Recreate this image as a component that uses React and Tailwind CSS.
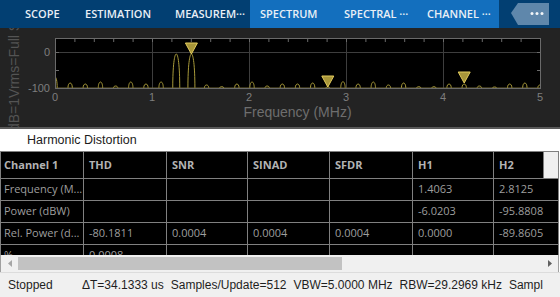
import React from "react"

const tops = [49, 55, 56, 54, 58, 54, 56, 54, 26, 26, 57, 58.7, 56, 54, 58, 56, 56, 55, 59, 53.7, 56, 54, 57, 55, 58.7, 58.7, 56, 56, 58, 59, 56, 55, 57]

function Bump({ x, top, w }) {
  const c = (top - 15) / 0.75
  return <path d={`M${x - w} 60 C${x - w} ${c} ${x + w} ${c} ${x + w} 60`} fill="none" stroke="#a89a3a" strokeWidth="1" />
}

function Marker({ x, y }) {
  return <polygon points={`${x - 6},${y} ${x + 6},${y} ${x},${y + 11}`} fill="#a8963a" stroke="#e2cb5c" strokeWidth="1" />
}

function Spectrum() {
  const px = f => 55 + f * 97
  const minor = []
  for (let f = 0.2; f < 5; f += 0.2) minor.push(px(f))
  return (
    <svg width="560" height="99" className="block">
      <rect x="0" y="0" width="560" height="99" fill="#232323" />
      <rect x="55.5" y="10.5" width="485" height="50" fill="#000" stroke="#6a6a6a" />
      {[1, 2, 3, 4].map(f => (
        <line key={f} x1={px(f) + 0.5} y1="11" x2={px(f) + 0.5} y2="60" stroke="#3e3e3e" />
      ))}
      <line x1="56" y1="24.5" x2="540" y2="24.5" stroke="#3e3e3e" />
      {minor.map((x, i) => (
        <line key={i} x1={x + 0.5} y1="11" x2={x + 0.5} y2="14" stroke="#6a6a6a" />
      ))}
      {[24.5, 42.5].map(y => (
        <g key={y}>
          <line x1="56" y1={y} x2="59" y2={y} stroke="#6a6a6a" />
          <line x1="537" y1={y} x2="540" y2={y} stroke="#6a6a6a" />
        </g>
      ))}
      <clipPath id="ax"><rect x="56" y="11" width="484" height="49" /></clipPath>
      <g clipPath="url(#ax)">
        {tops.map((t, k) => (
          <Bump key={k} x={px(k * 0.15625)} top={t} w={k === 8 || k === 9 ? 3.5 : 2.2} />
        ))}
        <line x1="56" y1="60" x2="540" y2="60" stroke="#6f6530" />
      </g>
      <Marker x={191.4} y={15} />
      <Marker x={327.8} y={48} />
      <Marker x={464.2} y={44} />
      <g fontFamily="'Liberation Sans', Arial, sans-serif" fontSize="11" fill="#7e7e7e">
        <text x="50" y="28" textAnchor="end">0</text>
        <text x="50" y="64" textAnchor="end">-100</text>
        {[0, 1, 2, 3, 4, 5].map(f => (
          <text key={f} x={px(f)} y="73" textAnchor="middle">{f}</text>
        ))}
      </g>
      <text x="297.5" y="89" textAnchor="middle" fontFamily="'Liberation Sans', Arial, sans-serif" fontSize="14" fill="#6e6e6e">Frequency (MHz)</text>
      <text transform="translate(19,103) rotate(-90)" fontFamily="'Liberation Sans', Arial, sans-serif" fontSize="14" fill="#545454">dB=1Vrms=Full Scale)</text>
    </svg>
  )
}

const rows = [
  ["Frequency (M...", "", "", "", "", "1.4063", "2.8125"],
  ["Power (dBW)", "", "", "", "", "-6.0203", "-95.8808"],
  ["Rel. Power (d...", "-80.1811", "0.0004", "0.0004", "0.0004", "0.0000", "-89.8605"],
  ["%", "0.0008", "", "", "", "", ""],
]

const widths = ["w-[83px]", "w-[83px]", "w-[81px]", "w-[82px]", "w-[83px]", "w-[81px]"]

export default function App() {
  return (
    <div className="w-[560px] h-[297px] overflow-hidden flex flex-col bg-white" style={{ fontFamily: "'Open Sans', 'Noto Sans', sans-serif" }}>
      {/* toolstrip */}
      <div className="h-[28px] flex bg-[#023f72] text-[11px] font-semibold text-[#e9eff6] shrink-0">
        <div className="w-[250px] flex items-center pl-[25px]">
          <div className="w-[60px]">SCOPE</div>
          <div className="w-[90px]">ESTIMATION</div>
          <div className="w-[75px]">MEASUREM···</div>
        </div>
        <div className="w-[249px] flex items-center pl-[10px] bg-[#136fbe]">
          <div className="w-[84px]">SPECTRUM</div>
          <div className="w-[83px]">SPECTRAL ···</div>
          <div className="w-[72px]">CHANNEL ···</div>
        </div>
        <div className="flex-1 flex items-center pl-[12px]">
          <svg width="40" height="24" className="block">
            <polygon points="0,11 7,1 38,1 38,23 7,23" fill="#5f87ab" />
            <circle cx="21" cy="11.5" r="1.5" fill="#f2f5f8" />
            <circle cx="26" cy="11.5" r="1.5" fill="#f2f5f8" />
            <circle cx="31" cy="11.5" r="1.5" fill="#f2f5f8" />
          </svg>
        </div>
      </div>

      {/* plot */}
      <div className="shrink-0 border-b-2 border-[#5a5a5a]">
        <Spectrum />
      </div>

      {/* title */}
      <div className="h-[22px] shrink-0 flex items-center pl-[27px] text-[12.5px] text-[#1c1c1c]" style={{ fontFamily: "'Liberation Sans', Arial, sans-serif" }}>
        Harmonic Distortion
      </div>

      {/* table */}
      <div className="h-[104px] shrink-0 overflow-hidden bg-black border-t border-l border-[#808080] mr-[1px]">
        <div className="h-[27px] flex border-b border-[#808080] text-[11px] font-bold text-[#b3b3b3]">
          {["Channel 1", "THD", "SNR", "SINAD", "SFDR", "H1"].map((h, i) => (
            <div key={h} className={`${widths[i]} shrink-0 flex items-center border-r border-[#808080] ${i === 0 ? "pl-[3px]" : "pl-[5px]"}`}>{h}</div>
          ))}
          <div className="w-[50px] shrink-0 flex items-center pl-[5px] border-r border-[#808080]">H2</div>
          <div className="flex-1 bg-[#f0f0f0] border-r border-[#808080]"></div>
        </div>
        {rows.map((r, ri) => (
          <div key={ri} className="h-[22px] flex border-b border-[#808080] text-[11px] text-[#9e9e9e]">
            {r.slice(0, 6).map((c, i) => (
              <div key={i} className={`${widths[i]} shrink-0 flex items-center whitespace-nowrap overflow-hidden border-r border-[#808080] ${i === 0 ? "pl-[3px]" : "pl-[5px]"}`}>{c}</div>
            ))}
            <div className="flex-1 flex items-center pl-[5px] border-r border-[#808080]">{r[6]}</div>
          </div>
        ))}
      </div>

      {/* h-scrollbar */}
      <div className="h-[17px] shrink-0 flex items-center bg-[#f0f0f0] border-l border-r border-[#a0a0a0] mr-[1px]">
        <div className="w-[17px] flex justify-center">
          <svg width="4" height="7"><polygon points="4,0 4,7 0,3.5" fill="#a6a6a6" /></svg>
        </div>
        <div className="w-[324px] h-[13px] bg-[#c2c2c2]"></div>
        <div className="flex-1"></div>
        <div className="w-[17px] flex justify-center">
          <svg width="4" height="7"><polygon points="0,0 0,7 4,3.5" fill="#606060" /></svg>
        </div>
      </div>

      {/* status */}
      <div className="flex-1 flex items-center bg-[#f0f0f0] border-t border-[#dcdcdc] pl-[8px] text-[12px] text-[#1e1e1e] whitespace-nowrap gap-[7px]" style={{ fontFamily: "'Liberation Sans', Arial, sans-serif" }}>
        <div className="w-[67px]">Stopped</div>
        <div>ΔT=34.1333 us</div>
        <div>Samples/Update=512</div>
        <div>VBW=5.0000 MHz</div>
        <div>RBW=29.2969 kHz</div>
        <div>Sampl</div>
      </div>
    </div>
  )
}
